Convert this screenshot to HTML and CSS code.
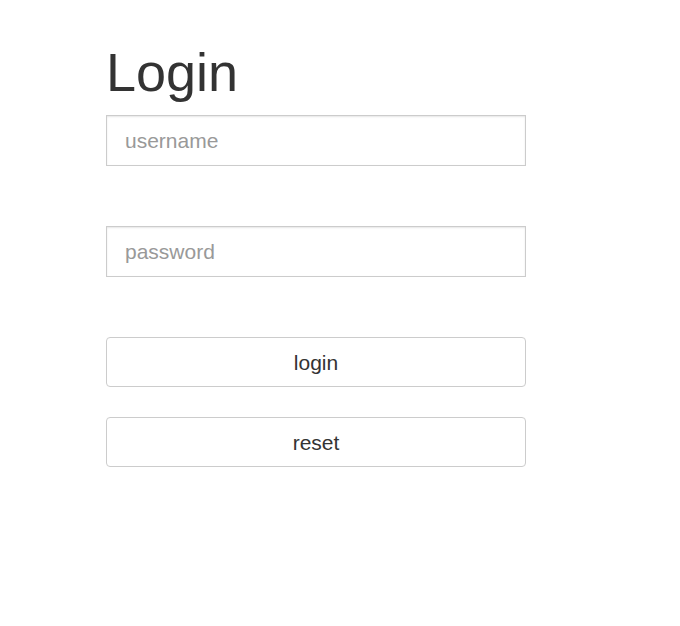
FILE: index.html
```html
<!DOCTYPE html>
<html lang="en">
<head>
    <meta charset="UTF-8">
    <meta name="viewport" content="width=device-width, initial-scale=1.0">
    <title>Login</title>
    <link rel="stylesheet" href="styles.css">
</head>
<body>
    <div class="container">
        <h1 class="title">Login</h1>
        <form class="login-form">
            <input type="text" class="field" placeholder="username">
            <input type="password" class="field" placeholder="password">
            <button type="submit" class="btn btn-login">login</button>
            <button type="reset" class="btn">reset</button>
        </form>
    </div>
</body>
</html>
```

FILE: styles.css
```css
* {
    margin: 0;
    padding: 0;
    box-sizing: border-box;
}

body {
    font-family: "Liberation Sans", Arial, sans-serif;
    background-color: #ffffff;
    color: #333333;
}

.container {
    padding-left: 106px;
    width: 526px;
}

.title {
    font-size: 54px;
    font-weight: 400;
    line-height: 59px;
    margin-top: 43px;
    margin-bottom: 13px;
}

.login-form {
    display: flex;
    flex-direction: column;
}

.field {
    height: 51px;
    width: 420px;
    padding: 1px 18px 0;
    border: 1px solid #cccccc;
    border-radius: 0;
    box-shadow: inset 0 1px 2px rgba(0, 0, 0, 0.1);
    font-family: inherit;
    font-size: 21px;
    color: #333333;
    margin-bottom: 60px;
}

.field::placeholder {
    color: #999999;
}

.field:focus {
    outline: none;
    border-color: #66afe9;
}

.btn {
    height: 50px;
    width: 420px;
    padding-top: 2px;
    background: #ffffff;
    border: 1px solid #cccccc;
    border-radius: 4px;
    font-family: inherit;
    font-size: 21px;
    color: #333333;
    cursor: pointer;
}

.btn:hover {
    background: #e6e6e6;
}

.btn-login {
    margin-bottom: 30px;
}
```
